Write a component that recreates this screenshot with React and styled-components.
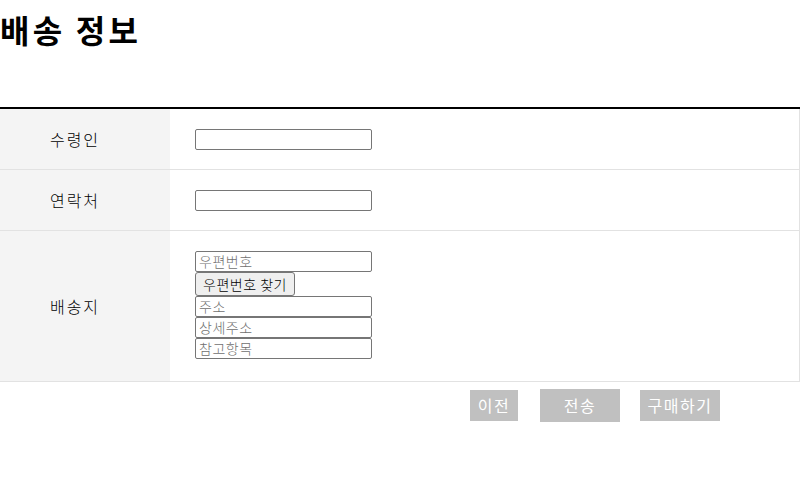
import React from 'react';
import styled, { createGlobalStyle } from 'styled-components';

const GlobalStyle = createGlobalStyle`
  body {
    margin: 0;
    background: #fff;
    color: #000;
    font-family: "Noto Sans CJK KR", sans-serif;
    font-weight: 400;
  }
`;

const Title = styled.h1`
  margin: 8px 0 57px;
  font-size: 32px;
  line-height: 42px;
  font-weight: 700;
  letter-spacing: 3.2px;
  font-family: "Noto Sans CJK KR", sans-serif;
`;

const Table = styled.table`
  width: 800px;
  border-collapse: collapse;
  border-top: 2px solid #000;
`;

const Row = styled.tr`
  height: ${({ $height }) => $height}px;
  border-bottom: 1px solid #e2e2e2;
`;

const Label = styled.th`
  width: 150px;
  padding: 0 20px 0 0;
  background: #f4f4f4;
  font-weight: 300;
  font-size: 16px;
  letter-spacing: 2px;
  text-align: center;
  vertical-align: middle;
  font-family: "Noto Sans CJK KR", sans-serif;
`;

const Cell = styled.td`
  padding: ${({ $tall }) => ($tall ? '20px 25px 22px' : '2px 25px 0')};
  vertical-align: middle;
  border-right: 1px solid #e2e2e2;
`;

const Input = styled.input`
  display: block;
  box-sizing: border-box;
  width: 177px;
  height: 21px;
  margin: 0;
  padding: 0 3px;
  border: 1px solid #767676;
  border-radius: 2px;
  font-size: 14px;
  font-weight: 300;
  letter-spacing: 0.5px;
  font-family: "Noto Sans CJK KR", sans-serif;
  &::placeholder {
    color: #6f6f6f;
  }
`;

const FindButton = styled.button`
  display: block;
  box-sizing: border-box;
  width: 100px;
  height: 24px;
  margin: 0;
  padding: 0;
  background: #efefef;
  border: 1px solid #767676;
  border-radius: 3px;
  font-size: 14px;
  font-weight: 300;
  letter-spacing: 0.5px;
  color: #000;
  font-family: "Noto Sans CJK KR", sans-serif;
`;

const Actions = styled.div`
  display: flex;
  align-items: center;
  padding-left: 470px;
  margin-top: 7px;
`;

const ActionButton = styled.button`
  box-sizing: border-box;
  height: ${({ $tall }) => ($tall ? 33 : 31)}px;
  width: ${({ $width }) => $width}px;
  margin: 0 0 0 ${({ $gap }) => $gap || 0}px;
  padding: 0;
  border: none;
  background: #c0c0c0;
  color: #fff;
  font-size: 16px;
  font-weight: 400;
  letter-spacing: 1.5px;
  font-family: "Noto Sans CJK KR", sans-serif;
`;

export default function App() {
  return (
    <>
      <GlobalStyle />
      <Title>배송 정보</Title>
      <Table>
        <tbody>
          <Row $height={61}>
            <Label>수령인</Label>
            <Cell><Input type="text" /></Cell>
          </Row>
          <Row $height={61}>
            <Label>연락처</Label>
            <Cell><Input type="text" /></Cell>
          </Row>
          <Row $height={151}>
            <Label>배송지</Label>
            <Cell $tall>
              <Input type="text" placeholder="우편번호" />
              <FindButton type="button">우편번호 찾기</FindButton>
              <Input type="text" placeholder="주소" />
              <Input type="text" placeholder="상세주소" />
              <Input type="text" placeholder="참고항목" />
            </Cell>
          </Row>
        </tbody>
      </Table>
      <Actions>
        <ActionButton type="button" $width={48}>이전</ActionButton>
        <ActionButton type="submit" $tall $width={80} $gap={22}>전송</ActionButton>
        <ActionButton type="button" $width={80} $gap={20}>구매하기</ActionButton>
      </Actions>
    </>
  );
}
